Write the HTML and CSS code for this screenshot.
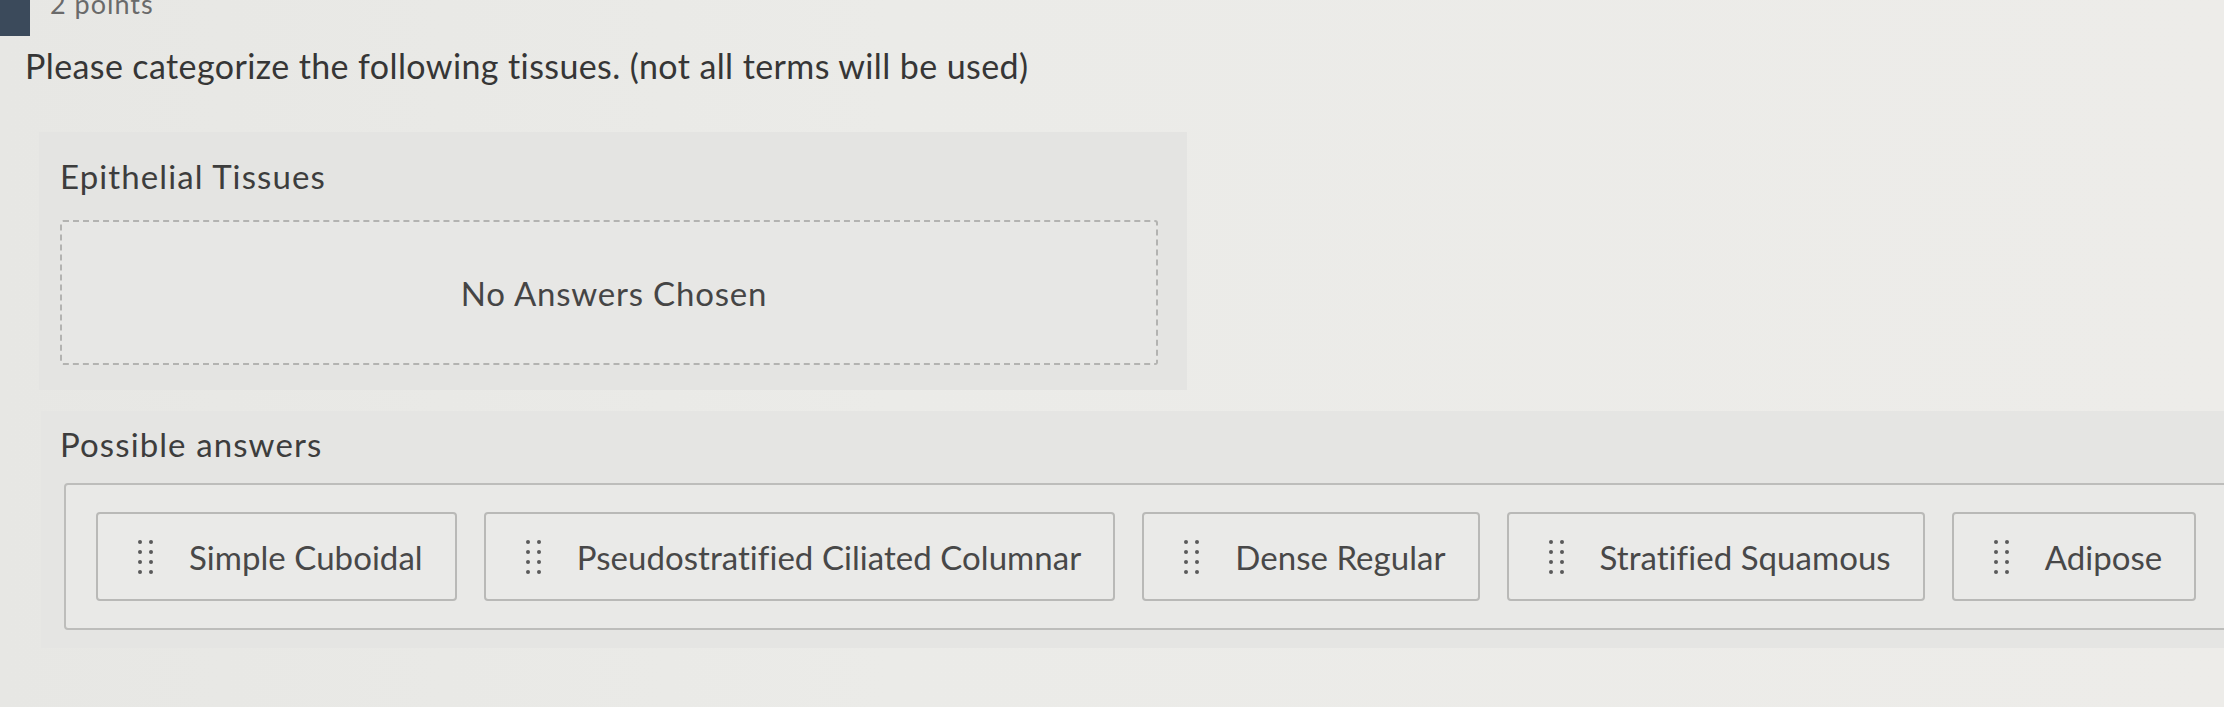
FILE: index.html
```html
<!DOCTYPE html>
<html lang="en">
<head>
<meta charset="utf-8">
<title>Categorize tissues</title>
<link rel="stylesheet" href="styles.css">
</head>
<body>
<div class="page">
  <div class="points-row">
    <div class="points-flag"></div>
    <div class="points-text">2 points</div>
  </div>
  <div class="question">
    <p class="prompt">Please categorize the following tissues. (not all terms will be used)</p>
    <section class="category">
      <h2 class="category-title">Epithelial Tissues</h2>
      <div class="dropzone">No Answers Chosen</div>
    </section>
    <section class="answers">
      <h2 class="answers-title">Possible answers</h2>
      <div class="answer-box">
        <div class="chip"><span class="handle"><i></i><i></i><i></i><i></i><i></i><i></i><i></i><i></i></span><span class="chip-label">Simple Cuboidal</span></div>
        <div class="chip"><span class="handle"><i></i><i></i><i></i><i></i><i></i><i></i><i></i><i></i></span><span class="chip-label">Pseudostratified Ciliated Columnar</span></div>
        <div class="chip"><span class="handle"><i></i><i></i><i></i><i></i><i></i><i></i><i></i><i></i></span><span class="chip-label">Dense Regular</span></div>
        <div class="chip"><span class="handle"><i></i><i></i><i></i><i></i><i></i><i></i><i></i><i></i></span><span class="chip-label">Stratified Squamous</span></div>
        <div class="chip"><span class="handle"><i></i><i></i><i></i><i></i><i></i><i></i><i></i><i></i></span><span class="chip-label">Adipose</span></div>
      </div>
    </section>
  </div>
</div>
</body>
</html>
```

FILE: styles.css
```css
html, body {
  margin: 0;
  padding: 0;
}
body {
  background: linear-gradient(90deg, #e7e7e4 0%, #ebebe8 40%, #edece9 100%);
  font-family: Lato, "Open Sans", sans-serif;
  color: #3b3b3b;
  width: 2224px;
  height: 707px;
  overflow: hidden;
}
.page {
  position: relative;
}
.points-row {
  display: flex;
  align-items: flex-start;
  gap: 20px;
  height: 36px;
}
.points-flag {
  width: 30px;
  height: 36px;
  background: #3b4a5b;
}
.points-text {
  font-size: 27px;
  line-height: 32px;
  letter-spacing: 1px;
  margin-top: -12px;
  color: #6a6a6a;
}
.question {
  padding-left: 25px;
}
.prompt {
  margin: 9px 0 0 0;
  font-size: 34px;
  line-height: 41px;
  letter-spacing: 0.4px;
  color: #363636;
}
.category {
  margin: 46px 0 0 14px;
  width: 1098px;
  padding: 24px 29px 25px 21px;
  background: #e4e4e2;
}
.category-title,
.answers-title {
  margin: 0;
  font-weight: 400;
  font-size: 33px;
  line-height: 40px;
  letter-spacing: 1.1px;
  color: #3d3d3d;
}
.dropzone {
  margin-top: 24px;
  height: 141px;
  border: 2px dashed #b3b3b1;
  border-radius: 3px;
  display: flex;
  align-items: center;
  justify-content: center;
  padding-left: 10px;
  font-size: 33px;
  letter-spacing: 0.8px;
  color: #454545;
  background: #e7e7e5;
}
.answers {
  margin: 21px 0 0 16px;
  padding: 13px 0 18px 19px;
  background: #e5e5e3;
}
.answer-box {
  margin-top: 19px;
  margin-left: 4px;
  width: 2300px;
  box-sizing: border-box;
  border: 2px solid #bdbdbb;
  border-radius: 4px;
  padding: 27px 26px 27px 30px;
  display: flex;
  gap: 27px;
  background: #e9e9e7;
}
.chip {
  box-sizing: border-box;
  height: 89px;
  border: 2px solid #b9b9b7;
  border-radius: 4px;
  display: flex;
  align-items: center;
  padding: 0 32px 0 40px;
  gap: 36px;
  background: #eaeae8;
}
.handle {
  display: grid;
  grid-template-columns: 4px 4px;
  grid-auto-rows: 4px;
  column-gap: 7px;
  row-gap: 6px;
  width: 15px;
}
.handle i {
  display: block;
  width: 4px;
  height: 4px;
  border-radius: 50%;
  background: #5a5a5a;
}
.chip-label {
  font-size: 33px;
  line-height: 40px;
  letter-spacing: 0.05px;
  color: #484848;
  white-space: nowrap;
}
```
